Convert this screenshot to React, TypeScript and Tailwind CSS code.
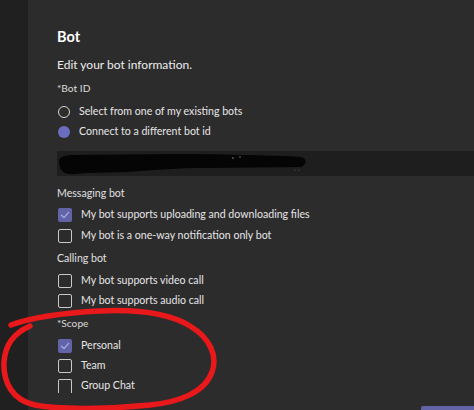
const font = { fontFamily: '"Lato", "Noto Sans", sans-serif' };

function Radio({ checked, label }: { checked?: boolean; label: string }) {
  return (
    <div className="flex h-5 items-center">
      {checked ? (
        <span className="ml-px block h-3 w-3 rounded-full bg-[#6b6ec0]" />
      ) : (
        <span className="ml-px block h-3 w-3 rounded-full border-[1.5px] border-[#d8d8d8]" />
      )}
      <span className="ml-[9px] text-[10.6px] text-[#e6e6e6]">{label}</span>
    </div>
  );
}

function Check({ checked, label, open }: { checked?: boolean; label: string; open?: boolean }) {
  return (
    <div className="flex h-5 items-center">
      {checked ? (
        <span className="ml-px flex h-[14px] w-[14px] items-center justify-center rounded-[2px] bg-[#6264a7]">
          <svg width="10" height="10" viewBox="0 0 10 10" fill="none">
            <path d="M1.5 5.2 L4 7.6 L8.6 2.4" stroke="#a9acf0" strokeWidth="1.3" strokeLinecap="round" strokeLinejoin="round" />
          </svg>
        </span>
      ) : (
        <span
          className={
            open
              ? "ml-px block h-[14px] w-[14px] rounded-t-[2px] border-[1.5px] border-b-0 border-[#c9c9c9]"
              : "ml-px block h-[14px] w-[14px] rounded-[2px] border-[1.5px] border-[#c9c9c9]"
          }
        />
      )}
      <span className="ml-[9px] text-[10.6px] text-[#e6e6e6]">{label}</span>
    </div>
  );
}

export default function App() {
  return (
    <div className="relative flex h-[410px] w-[474px] overflow-hidden bg-[#2d2c2d]" style={font}>
      {/* left rail */}
      <div className="w-[28px] shrink-0 bg-[#212021]" />

      <div className="flex flex-1 flex-col pl-[29px] pt-[27px]">
        <div className="flex h-5 items-center text-[14.5px] font-bold text-white">Bot</div>
        <div className="mt-2 flex h-5 items-center text-[12px] text-[#ececec]">Edit your bot information.</div>
        <div className="mt-1 flex h-5 items-center text-[10.2px] text-[#dadada]">*Bot ID</div>

        <div className="mt-[3px]">
          <Radio label="Select from one of my existing bots" />
          <Radio checked label="Connect to a different bot id" />
        </div>

        <div className="relative mt-[9px] h-[25px] bg-[#1f1e1f]">
          <svg className="absolute left-0 top-0" width="260" height="25" viewBox="0 0 260 25">
            <path
              d="M2 10 C2 6 8 4 16 4 L120 3 C160 3 190 4 230 5 L244 6 C250 7 250 14 244 16 L150 17 C120 17 100 19 70 21 L30 22 C22 22 18 24 12 23 C4 22 2 16 2 10 Z"
              fill="#050505"
            />
            <circle cx="176" cy="7" r="0.8" fill="#888" />
            <circle cx="183" cy="6" r="0.8" fill="#777" />
            <circle cx="238" cy="19" r="0.6" fill="#666" />
            <circle cx="242" cy="19" r="0.6" fill="#666" />
          </svg>
        </div>

        <div className="mt-2 flex h-5 items-center text-[10.6px] text-[#e0e0e0]">Messaging bot</div>
        <div className="mt-px">
          <Check checked label="My bot supports uploading and downloading files" />
          <div className="mt-px">
            <Check label="My bot is a one-way notification only bot" />
          </div>
        </div>

        <div className="mt-[3px] flex h-5 items-center text-[10.6px] text-[#e0e0e0]">Calling bot</div>
        <div className="mt-[2px]">
          <Check label="My bot supports video call" />
          <Check label="My bot supports audio call" />
        </div>

        <div className="mt-[3px] flex h-5 items-center text-[10.2px] text-[#dadada]">*Scope</div>
        <div className="mt-[2px]">
          <Check checked label="Personal" />
          <Check label="Team" />
          <Check open label="Group Chat" />
        </div>
      </div>

      {/* purple button peeking at bottom right */}
      <div className="absolute bottom-0 right-0 h-[4px] w-[53px] rounded-tl-[2px] bg-[#6264a7]" />

      {/* red annotation */}
      <svg className="pointer-events-none absolute left-0 top-0" width="474" height="410" viewBox="0 0 474 410">
        <path
          d="M11 325 C30 318 60 313 100 311 C140 309 170 314 190 326 C210 338 218 356 212 372 C205 392 180 402 150 405 C110 409 60 410 35 405 C12 400 3 382 4 362 C5 345 14 333 30 326"
          fill="none"
          stroke="#e8181b"
          strokeWidth="5.5"
          strokeLinecap="round"
          strokeLinejoin="round"
        />
      </svg>
    </div>
  );
}
